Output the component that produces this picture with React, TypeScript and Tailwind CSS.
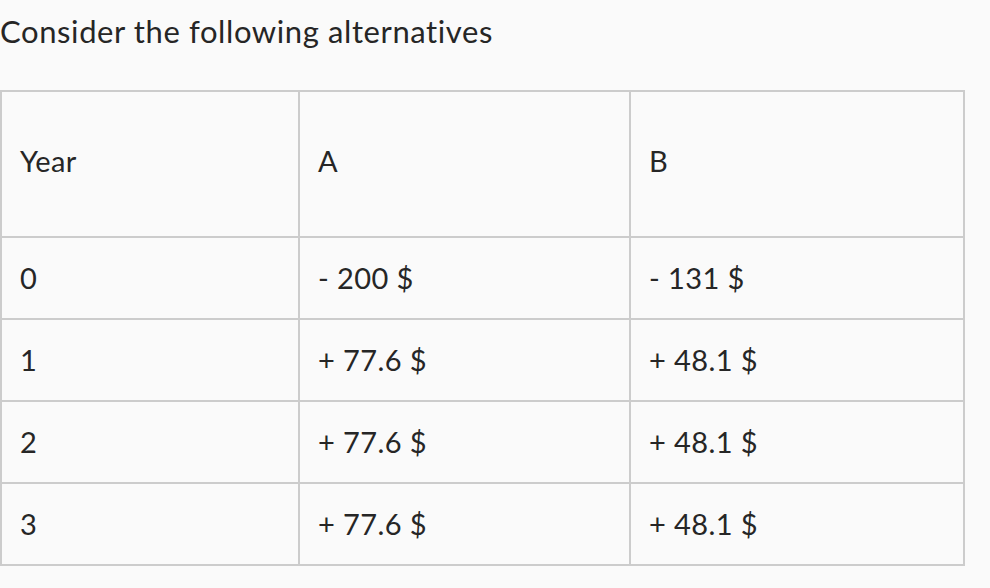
import React from "react";

const rows = [
  ["0", "- 200 $", "- 131 $"],
  ["1", "+ 77.6 $", "+ 48.1 $"],
  ["2", "+ 77.6 $", "+ 48.1 $"],
  ["3", "+ 77.6 $", "+ 48.1 $"],
];

export default function App() {
  return (
    <div
      className="w-[990px] h-[588px] bg-[#fafafa] text-[#262626] overflow-hidden"
      style={{ fontFamily: "Lato, 'Open Sans', sans-serif" }}
    >
      <div className="text-[31px] leading-[36px] pt-[13px] tracking-[0.6px]">Consider the following alternatives</div>
      <table className="mt-[41px] border-collapse text-[29px] tracking-[0.4px] w-[963px] table-fixed">
        <colgroup>
          <col className="w-[298px]" />
          <col className="w-[331px]" />
          <col className="w-[334px]" />
        </colgroup>
        <tbody>
          <tr className="h-[146px]">
            <td className="border-2 border-[#cccccc] pl-[18px] pb-[6px] align-middle">Year</td>
            <td className="border-2 border-[#cccccc] pl-[18px] pb-[6px] align-middle">A</td>
            <td className="border-2 border-[#cccccc] pl-[18px] pb-[6px] align-middle">B</td>
          </tr>
          {rows.map((r, i) => (
            <tr key={i} className="h-[82px]">
              {r.map((c, j) => (
                <td key={j} className="border-2 border-[#cccccc] pl-[18px] align-middle">
                  {c}
                </td>
              ))}
            </tr>
          ))}
        </tbody>
      </table>
    </div>
  );
}
